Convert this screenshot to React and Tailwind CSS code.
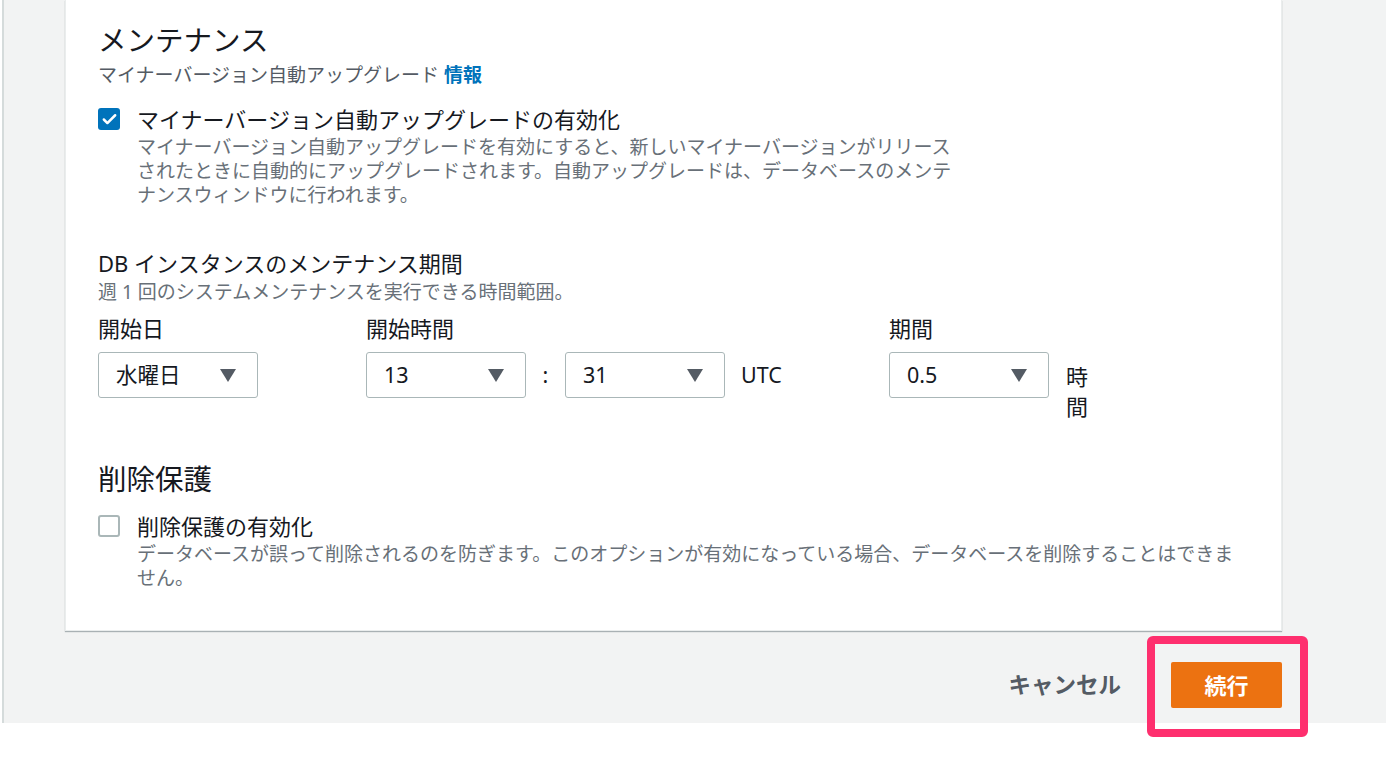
import { Check } from "lucide-react";

const font = { fontFamily: '"Noto Sans", "Noto Sans CJK JP", sans-serif' };

const Caret = () => (
  <svg width="16" height="13" viewBox="0 0 16 13" className="shrink-0">
    <polygon points="0,0 16,0 8,13" fill="#545b64" />
  </svg>
);

const Select = ({ value }) => (
  <div className="flex h-[46px] w-[160px] items-center justify-between rounded-[3px] border border-[#aab7b8] bg-white pl-[17px] pr-[21px] text-[21.5px] text-[#16191f]">
    <span>{value}</span>
    <Caret />
  </div>
);

const CheckRow = ({ checked, label, children }) => (
  <div className="flex items-start gap-[17px]">
    {checked ? (
      <div className="mt-[3px] flex h-[22px] w-[22px] shrink-0 items-center justify-center rounded-[3px] bg-[#0073bb]">
        <Check className="h-[17px] w-[17px] text-white" strokeWidth={3.5} />
      </div>
    ) : (
      <div className="mt-[3px] h-[22px] w-[22px] shrink-0 rounded-[3px] border-2 border-[#aab7b8] bg-white" />
    )}
    <div>
      <div className="text-[22px] leading-[28px] text-[#16191f]">{label}</div>
      {children}
    </div>
  </div>
);

export default function App() {
  return (
    <div className="relative bg-white" style={font}>
      <div className="ml-[2px] h-[723px] border-l-2 border-[#d5dbdb] bg-[#f2f3f3]">
        <div className="ml-[61px] w-[1217px] border border-t-0 border-[#eaeded] bg-white pb-[40px] pl-[32px] pt-[22px] shadow-[0_1px_1px_0_rgba(0,28,36,0.3)]">
          <h2 className="text-[28.5px] leading-[36px] text-[#16191f]">メンテナンス</h2>
          <div className="mt-[5px] text-[19px] leading-[24px] text-[#545b64]">
            マイナーバージョン自動アップグレード <span className="font-bold text-[#0073bb]">情報</span>
          </div>

          <div className="mt-[18px]">
            <CheckRow checked label="マイナーバージョン自動アップグレードの有効化">
              <p className="mt-[2px] w-[822px] text-[19px] leading-[24px] text-[#687078]">
                マイナーバージョン自動アップグレードを有効にすると、新しいマイナーバージョンがリリースされたときに自動的にアップグレードされます。自動アップグレードは、データベースのメンテナンスウィンドウに行われます。
              </p>
            </CheckRow>
          </div>

          <div className="mt-[42px] text-[22px] leading-[28px] text-[#16191f]">DB インスタンスのメンテナンス期間</div>
          <div className="mt-[3px] text-[19px] leading-[24px] text-[#687078]">週 1 回のシステムメンテナンスを実行できる時間範囲。</div>

          <div className="mt-[10px] flex items-start">
            <div className="w-[268px]">
              <div className="text-[22px] leading-[28px] text-[#16191f]">開始日</div>
              <div className="mt-[10px]">
                <Select value="水曜日" />
              </div>
            </div>
            <div className="w-[523px]">
              <div className="text-[22px] leading-[28px] text-[#16191f]">開始時間</div>
              <div className="mt-[10px] flex items-center">
                <Select value="13" />
                <span className="w-[39px] text-center text-[21.5px] text-[#16191f]">:</span>
                <Select value="31" />
                <span className="ml-[16px] text-[21.5px] text-[#16191f]">UTC</span>
              </div>
            </div>
            <div>
              <div className="text-[22px] leading-[28px] text-[#16191f]">期間</div>
              <div className="mt-[10px] flex items-start">
                <Select value="0.5" />
                <div className="ml-[17px] mt-[9px] w-[22px] text-[22px] leading-[30px] text-[#16191f]">
                  <div>時</div>
                  <div>間</div>
                </div>
              </div>
            </div>
          </div>

          <h2 className="mt-[40px] text-[28.5px] leading-[36px] text-[#16191f]">削除保護</h2>
          <div className="mt-[15px]">
            <CheckRow label="削除保護の有効化">
              <p className="mt-[2px] w-[1111px] text-[19px] leading-[24px] text-[#687078]">
                データベースが誤って削除されるのを防ぎます。このオプションが有効になっている場合、データベースを削除することはできません。
              </p>
            </CheckRow>
          </div>
        </div>

        <div className="ml-[61px] flex w-[1217px] items-center justify-end gap-[50px] pt-[31px]">
          <button className="text-[22.5px] font-bold text-[#545b64]">キャンセル</button>
          <button className="h-[46px] w-[111px] rounded-[2px] bg-[#ec7211] text-[22px] font-bold text-white">続行</button>
        </div>
      </div>

      <div className="absolute left-[1147px] top-[636px] h-[101px] w-[161px] rounded-[6px] border-[8px] border-[#fe2f6e]" />
      <div className="h-[55px]" />
    </div>
  );
}
